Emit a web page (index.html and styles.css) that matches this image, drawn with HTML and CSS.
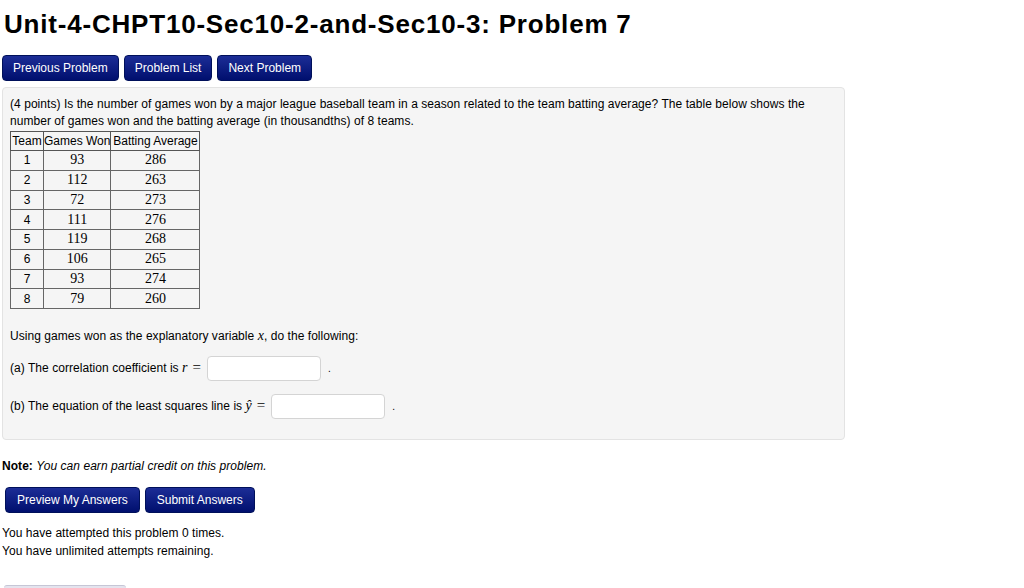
FILE: index.html
```html
<!DOCTYPE html>
<html lang="en">
<head>
    <meta charset="UTF-8">
    <title>Unit-4-CHPT10-Sec10-2-and-Sec10-3: Problem 7</title>
    <link rel="stylesheet" href="styles.css">
</head>
<body>
    <h1 class="title">Unit-4-CHPT10-Sec10-2-and-Sec10-3: Problem 7</h1>

    <div class="nav">
        <button class="btn">Previous Problem</button>
        <button class="btn">Problem List</button>
        <button class="btn">Next Problem</button>
    </div>

    <div class="problem">
        <p class="intro">(4 points) Is the number of games won by a major league baseball team in a season related to the team batting average? The table below shows the number of games won and the batting average (in thousandths) of 8 teams.</p>

        <table class="data">
            <tr><th class="c-team">Team</th><th class="c-won">Games Won</th><th class="c-avg">Batting Average</th></tr>
            <tr><td class="team">1</td><td>93</td><td>286</td></tr>
            <tr><td class="team">2</td><td>112</td><td>263</td></tr>
            <tr><td class="team">3</td><td>72</td><td>273</td></tr>
            <tr><td class="team">4</td><td>111</td><td>276</td></tr>
            <tr><td class="team">5</td><td>119</td><td>268</td></tr>
            <tr><td class="team">6</td><td>106</td><td>265</td></tr>
            <tr><td class="team">7</td><td>93</td><td>274</td></tr>
            <tr><td class="team">8</td><td>79</td><td>260</td></tr>
        </table>

        <p class="lead">Using games won as the explanatory variable <span class="math">x</span>, do the following:</p>

        <p class="question">(a) The correlation coefficient is <span class="math">r</span><span class="eq">=</span><input type="text" class="answer" size="12"><span class="dot">.</span></p>

        <p class="question">(b) The equation of the least squares line is <span class="math">ŷ</span><span class="eq">=</span><input type="text" class="answer" size="12"><span class="dot">.</span></p>
    </div>

    <p class="note"><b>Note:</b> <i>You can earn partial credit on this problem.</i></p>

    <div class="submit">
        <button class="btn btn-big">Preview My Answers</button>
        <button class="btn btn-big">Submit Answers</button>
    </div>

    <p class="attempts">You have attempted this problem 0 times.<br>You have unlimited attempts remaining.</p>

    <div class="more"></div>
</body>
</html>
```

FILE: styles.css
```css
* {
    box-sizing: border-box;
}

body {
    margin: 0;
    padding: 0 2px;
    background: #ffffff;
    color: #000;
    font-family: 'Liberation Sans', Arial, sans-serif;
    font-size: 12px;
    letter-spacing: 0.05px;
}

.title {
    margin: 6px 0 0 2px;
    font-size: 26px;
    line-height: 36px;
    font-weight: bold;
    letter-spacing: 0.8px;
}

.nav {
    display: flex;
    gap: 5px;
    margin-top: 13px;
}

.btn {
    background: linear-gradient(#1c2d96, #000f6e);
    color: #fff;
    border: 1px solid #00105a;
    border-radius: 4px;
    font-family: 'Liberation Sans', Arial, sans-serif;
    font-size: 12px;
    height: 26px;
    padding: 0 10px;
    cursor: pointer;
}

.problem {
    margin-top: 6px;
    width: 843px;
    height: 353px;
    background: #f5f5f5;
    border: 1px solid #e3e3e3;
    border-radius: 4px;
    padding: 8px 7px;
}

.intro {
    margin: 0;
    line-height: 17px;
}

.data {
    border-collapse: collapse;
    border: 1px solid #333;
    margin-top: 1px;
    letter-spacing: 0;
}

.data th {
    font-weight: normal;
    font-size: 12px;
    height: 19px;
    padding: 0;
    border: 1px solid #555;
    white-space: nowrap;
}

.data .c-team {
    width: 33px;
}

.data .c-won {
    width: 67px;
}

.data .c-avg {
    width: 89px;
}

.data td {
    height: 19.75px;
    text-align: center;
    font-family: 'Liberation Serif', 'Times New Roman', serif;
    font-size: 14px;
    border: 1px solid #666;
    padding: 0;
}

.data td.team {
    font-family: 'Liberation Sans', Arial, sans-serif;
    font-size: 12px;
}

.lead {
    margin: 19px 0 0;
}

.question {
    margin: 10px 0 0;
    line-height: 26px;
}

.math {
    font-family: 'Liberation Serif', 'Times New Roman', serif;
    font-style: italic;
    font-size: 14px;
}

.eq {
    font-family: 'Liberation Serif', 'Times New Roman', serif;
    font-size: 15px;
    margin: 0 6px 0 5px;
}

.answer {
    width: 114px;
    height: 25px;
    background: #fff;
    border: 1px solid #d4d4d4;
    border-radius: 4px;
    margin: 0;
    vertical-align: middle;
}

.dot {
    margin-left: 7px;
    font-size: 10px;
}

.note {
    margin: 19px 0 0;
}

.submit {
    display: flex;
    gap: 5px;
    margin: 14px 0 0 3px;
}

.btn-big {
    font-size: 12px;
    height: 26px;
    padding: 0 11px;
}

.attempts {
    margin: 11px 0 0;
    line-height: 18px;
}

.more {
    margin: 25px 0 0 2px;
    width: 122px;
    height: 20px;
    background: #e4e4ee;
    border-top: 1px solid #c6c6d6;
    border-radius: 3px 3px 0 0;
}
```
